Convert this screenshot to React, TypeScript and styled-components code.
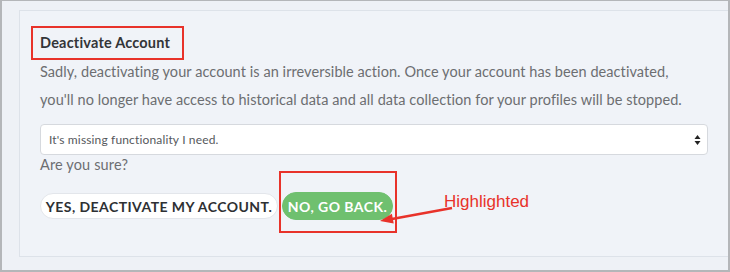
import React from "react";
import styled, { createGlobalStyle } from "styled-components";

const GlobalStyle = createGlobalStyle`
  * { box-sizing: border-box; }
  body {
    margin: 0;
    font-family: Lato, "Open Sans", sans-serif;
    background: #ffffff;
  }
`;

const Frame = styled.div`
  width: 730px;
  height: 272px;
  display: flex;
  background: #eef1f6;
  border-style: solid;
  border-color: #b4b6b9;
  border-width: 1px 2px 2px 2px;
  padding: 9px 0 13px 17px;
`;

const Panel = styled.section`
  flex: 1;
  display: flex;
  flex-direction: column;
  align-items: flex-start;
  background: #f0f3f8;
  border: 1px solid #dde2e9;
  border-right: none;
  padding: 22px 20px 0 20px;
`;

const Heading = styled.h2`
  position: relative;
  margin: 0;
  font-size: 14.5px;
  letter-spacing: 0.2px;
  line-height: 20px;
  font-weight: 700;
  color: #333538;
`;

const Callout = styled.span<{ $top: number; $left: number; $width: number; $height: number }>`
  position: absolute;
  top: ${(p) => p.$top}px;
  left: ${(p) => p.$left}px;
  width: ${(p) => p.$width}px;
  height: ${(p) => p.$height}px;
  border: 2px solid #e8322a;
  pointer-events: none;
`;

const Text = styled.p`
  margin: 5px 0 0;
  font-size: 14.5px;
  letter-spacing: 0.07px;
  line-height: 28px;
  color: #6c6e71;
`;

const SelectBox = styled.div`
  margin-top: 10px;
  width: 100%;
  height: 31px;
  display: flex;
  align-items: center;
  justify-content: space-between;
  background: #ffffff;
  border: 1px solid #d6d9de;
  border-radius: 4px;
  padding: 0 6px 0 8px;
  font-size: 12px;
  letter-spacing: 0.15px;
  color: #55585c;
`;

const Question = styled.div`
  font-size: 14.5px;
  letter-spacing: 0.14px;
  line-height: 20px;
  color: #6c6e71;
`;

const Actions = styled.div`
  margin-top: 17px;
  display: flex;
  align-items: center;
  gap: 4px;
`;

const Pill = styled.button<{ $primary?: boolean }>`
  height: ${(p) => (p.$primary ? 28 : 26)}px;
  width: ${(p) => (p.$primary ? 111 : 238)}px;
  border-radius: 14px;
  border: 1px solid ${(p) => (p.$primary ? "#6fc06f" : "#e3e6eb")};
  background: ${(p) => (p.$primary ? "#6fc06f" : "#ffffff")};
  color: ${(p) => (p.$primary ? "#ffffff" : "#2e3033")};
  font-family: Lato, "Open Sans", sans-serif;
  font-weight: 700;
  font-size: 14px;
  letter-spacing: 0.45px;
  padding: 0;
  text-transform: uppercase;
  white-space: nowrap;
`;

const Highlight = styled.div`
  position: relative;
  display: flex;
`;

const Note = styled.span`
  position: absolute;
  left: 162px;
  top: 0;
  font-family: "Liberation Sans", Arial, sans-serif;
  font-size: 17px;
  line-height: 20px;
  color: #e8322a;
  white-space: nowrap;
`;

const Arrow = styled.svg`
  position: absolute;
  left: 95px;
  top: 10px;
  overflow: visible;
`;

const Spinner = () => (
  <svg width="7" height="12" viewBox="0 0 7 12">
    <path d="M3.5 1 L6.5 5 H0.5 Z" fill="#222" />
    <path d="M3.5 11 L6.5 7 H0.5 Z" fill="#222" />
  </svg>
);

export default function App() {
  return (
    <>
      <GlobalStyle />
      <Frame>
        <Panel>
          <Heading>
            Deactivate Account
            <Callout $top={-7} $left={-9} $width={153} $height={34} />
          </Heading>
          <Text>
            Sadly, deactivating your account is an irreversible action. Once your account has been deactivated,
            <br />
            you'll no longer have access to historical data and all data collection for your profiles will be stopped.
          </Text>
          <SelectBox>
            <span>It's missing functionality I need.</span>
            <Spinner />
          </SelectBox>
          <Question>Are you sure?</Question>
          <Actions>
            <Pill>Yes, deactivate my account.</Pill>
            <Highlight>
              <Pill $primary>No, go back.</Pill>
              <Callout $top={-21} $left={-3} $width={118} $height={62} />
              <Arrow width="80" height="24" viewBox="0 0 80 24">
                <line x1="75" y1="6" x2="15" y2="17" stroke="#e8322a" strokeWidth="2.5" />
                <path d="M3 19 L16.7 21.6 L14.9 11.8 Z" fill="#e8322a" />
              </Arrow>
              <Note>Highlighted</Note>
            </Highlight>
          </Actions>
        </Panel>
      </Frame>
    </>
  );
}
